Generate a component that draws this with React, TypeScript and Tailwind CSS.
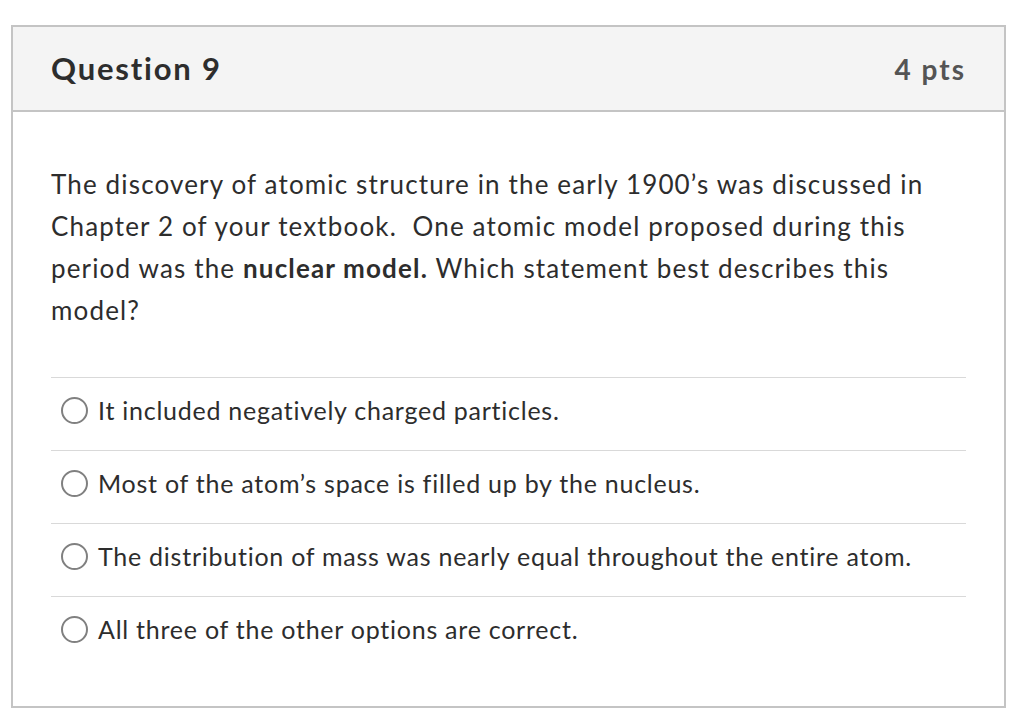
export default function App() {
  const answers = [
    'It included negatively charged particles.',
    'Most of the atom’s space is filled up by the nucleus.',
    'The distribution of mass was nearly equal throughout the entire atom.',
    'All three of the other options are correct.',
  ]

  return (
    <div className="w-[1024px] h-[721px] bg-white pt-[25px] pl-[11px]" style={{ fontFamily: 'Lato, "Open Sans", sans-serif' }}>
      <div className="w-[995px] h-[683px] border-2 border-[#c4c4c4] flex flex-col">
        {/* Header */}
        <div className="h-[85px] shrink-0 bg-[#f4f4f4] border-b-2 border-[#c4c4c4] flex items-center justify-between px-[38px]">
          <h2 className="text-[31px] font-bold tracking-[1.8px] text-[#2d2d2d] leading-none">Question 9</h2>
          <span className="text-[28px] font-bold tracking-[2px] text-[#545454] leading-none">4 pts</span>
        </div>

        {/* Body */}
        <div className="px-[38px] pt-[51px]">
          <p className="text-[26px] tracking-[1.15px] leading-[42px] text-[#2d2d2d] whitespace-nowrap">
            The discovery of atomic structure in the early 1900’s was discussed in<br />
            Chapter 2 of your textbook.&nbsp; One atomic model proposed during this<br />
            period was the <strong>nuclear model.</strong> Which statement best describes this<br />
            model?
          </p>

          <div className="mt-[46px]">
            {answers.map((a, i) => (
              <div key={i} className="h-[73px] border-t border-[#d9d9d9] flex items-center pl-[10px] pb-[8px] gap-[10px]">
                <span className="w-[27px] h-[27px] rounded-full border-[2.5px] border-[#808080] shrink-0" />
                <span className="text-[25px] tracking-[0.75px] text-[#2d2d2d] leading-none whitespace-nowrap">{a}</span>
              </div>
            ))}
          </div>
        </div>
      </div>
    </div>
  )
}
